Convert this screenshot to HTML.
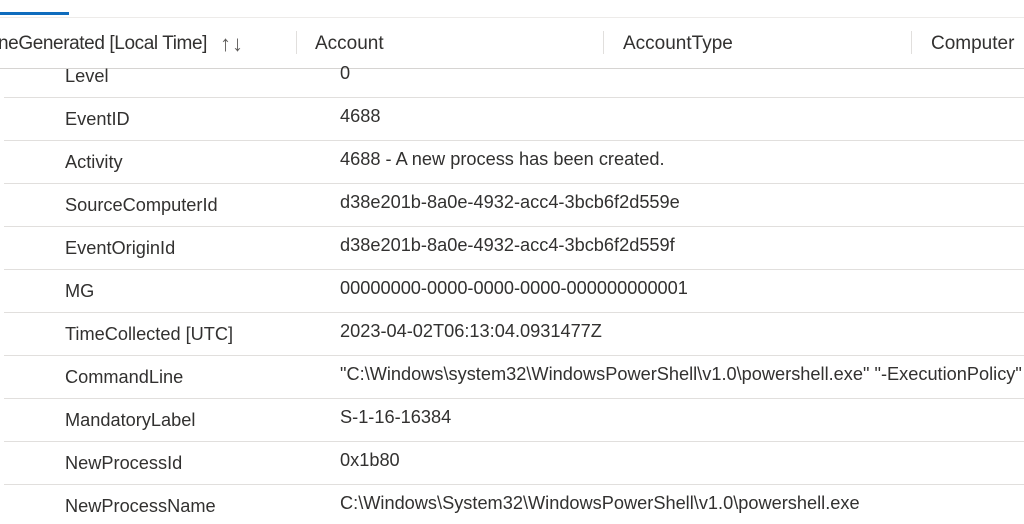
<!DOCTYPE html><html><head><style>
body{margin:0;width:1024px;height:524px;overflow:hidden;background:#fff;font-family:"Liberation Sans",sans-serif;color:#323130;position:relative}
.a{position:absolute;white-space:nowrap}
.t{font-size:18.2px}
.h{font-size:19px}
.l{position:absolute;left:4px;right:0;height:1px;background:#e1dfdd}
.s{position:absolute;top:31px;width:1px;height:23px;background:#e1dfdd}
</style></head><body>
<div class="a" style="left:0;top:12px;width:69px;height:3px;background:#0f6cbd"></div>
<div class="l" style="left:0;top:17px;background:#edebe9"></div>
<div class="l" style="left:0;top:68px;background:#d6d4d2"></div>
<div class="a h" style="left:-2px;top:33px;letter-spacing:-0.4px">neGenerated [Local Time]</div>
<div class="a" style="left:220px;top:31px;font-size:22px;color:#605e5c;letter-spacing:1px">↑↓</div>
<div class="s" style="left:296px"></div>
<div class="a h" style="left:315px;top:33px">Account</div>
<div class="s" style="left:603px"></div>
<div class="a h" style="left:623px;top:33px">AccountType</div>
<div class="s" style="left:911px"></div>
<div class="a h" style="left:931px;top:33px">Computer</div>
<div class="a t" style="left:65px;top:66px">Level</div><div class="a t" style="left:340px;top:63px">0</div>
<div class="l" style="top:97px"></div>
<div class="a t" style="left:65px;top:109px">EventID</div><div class="a t" style="left:340px;top:106px">4688</div>
<div class="l" style="top:140px"></div>
<div class="a t" style="left:65px;top:152px">Activity</div><div class="a t" style="left:340px;top:149px">4688 - A new process has been created.</div>
<div class="l" style="top:183px"></div>
<div class="a t" style="left:65px;top:195px">SourceComputerId</div><div class="a t" style="left:340px;top:192px">d38e201b-8a0e-4932-acc4-3bcb6f2d559e</div>
<div class="l" style="top:226px"></div>
<div class="a t" style="left:65px;top:238px">EventOriginId</div><div class="a t" style="left:340px;top:235px">d38e201b-8a0e-4932-acc4-3bcb6f2d559f</div>
<div class="l" style="top:269px"></div>
<div class="a t" style="left:65px;top:281px">MG</div><div class="a t" style="left:340px;top:278px">00000000-0000-0000-0000-000000000001</div>
<div class="l" style="top:312px"></div>
<div class="a t" style="left:65px;top:324px">TimeCollected [UTC]</div><div class="a t" style="left:340px;top:321px">2023-04-02T06:13:04.0931477Z</div>
<div class="l" style="top:355px"></div>
<div class="a t" style="left:65px;top:367px">CommandLine</div><div class="a t" style="left:340px;top:364px">"C:\Windows\system32\WindowsPowerShell\v1.0\powershell.exe" "-ExecutionPolicy"</div>
<div class="l" style="top:398px"></div>
<div class="a t" style="left:65px;top:410px">MandatoryLabel</div><div class="a t" style="left:340px;top:407px">S-1-16-16384</div>
<div class="l" style="top:441px"></div>
<div class="a t" style="left:65px;top:453px">NewProcessId</div><div class="a t" style="left:340px;top:450px">0x1b80</div>
<div class="l" style="top:484px"></div>
<div class="a t" style="left:65px;top:496px">NewProcessName</div><div class="a t" style="left:340px;top:493px">C:\Windows\System32\WindowsPowerShell\v1.0\powershell.exe</div>
</body></html>
